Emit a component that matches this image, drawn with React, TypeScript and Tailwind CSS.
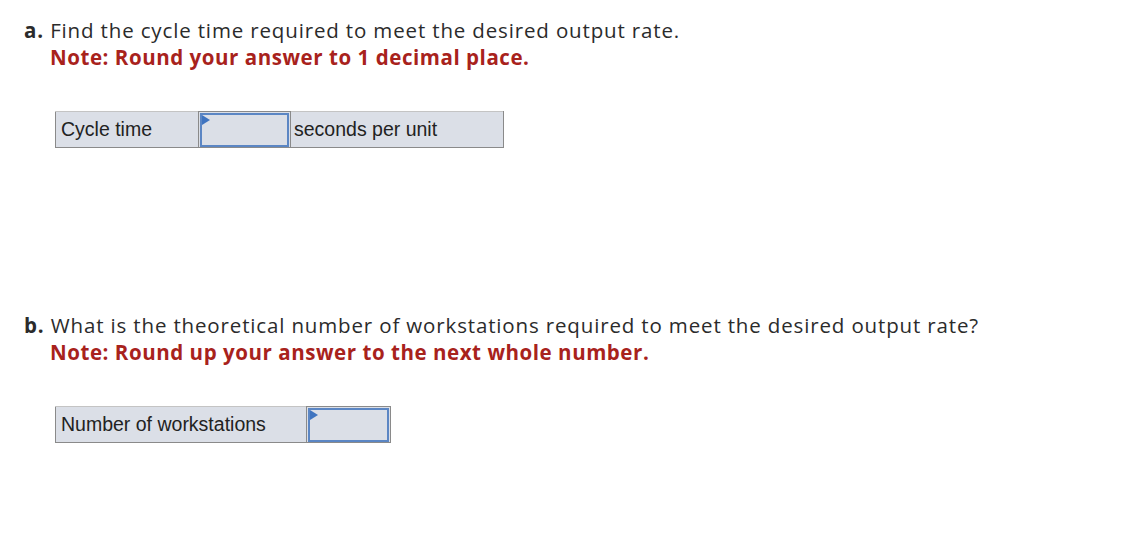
import React from "react";

const heading = "font-['Open_Sans','Lato',sans-serif]";
const cellFont = "font-['Liberation_Sans',Arial,sans-serif]";

const AnswerBox = ({ width }: { width: string }) => (
  <td className={`p-0 border border-[#8a8a8a] bg-[#dbdfe7] ${width}`}>
    <div className="relative h-[34px] border-2 border-[#5b86c4] mx-px">
      <span className="absolute left-0 top-0 w-0 h-0 border-y-[5px] border-y-transparent border-l-[8px] border-l-[#3f74c0]" />
    </div>
  </td>
);

const Question = ({
  letter,
  text,
  note,
}: {
  letter: string;
  text: string;
  note: string;
}) => (
  <div className={`${heading} text-[20.5px] leading-[27px] text-[#2b2b2b]`}>
    <p className="tracking-[0.85px]">
      <span className="font-bold">{letter}.</span> {text}
    </p>
    <p className="pl-[26px] font-bold tracking-[0.55px] text-[#a8221c]">{note}</p>
  </div>
);

export default function App() {
  return (
    <div className="w-[1122px] h-[548px] bg-white pl-[24px] pt-[17px]">
      <Question
        letter="a"
        text="Find the cycle time required to meet the desired output rate."
        note="Note: Round your answer to 1 decimal place."
      />
      <table className={`${cellFont} ml-[31px] mt-[40px] border-collapse text-[19.5px] text-[#222]`}>
        <tbody>
          <tr className="h-[36px]">
            <td className="w-[143px] border border-[#8a8a8a] border-t-[#c4c4c4] bg-[#dbdfe7] px-[5px] py-0">
              Cycle time
            </td>
            <AnswerBox width="w-[92px]" />
            <td className="w-[213px] border border-[#8a8a8a] border-t-[#c4c4c4] bg-[#dbdfe7] px-[3px] py-0">
              seconds per unit
            </td>
          </tr>
        </tbody>
      </table>

      <div className="mt-[164px]">
        <Question
          letter="b"
          text="What is the theoretical number of workstations required to meet the desired output rate?"
          note="Note: Round up your answer to the next whole number."
        />
      </div>
      <table className={`${cellFont} ml-[31px] mt-[40px] border-collapse text-[19.5px] text-[#222]`}>
        <tbody>
          <tr className="h-[36px]">
            <td className="w-[251px] border border-[#8a8a8a] border-t-[#c4c4c4] bg-[#dbdfe7] px-[5px] py-0">
              Number of workstations
            </td>
            <AnswerBox width="w-[84px]" />
          </tr>
        </tbody>
      </table>
    </div>
  );
}
